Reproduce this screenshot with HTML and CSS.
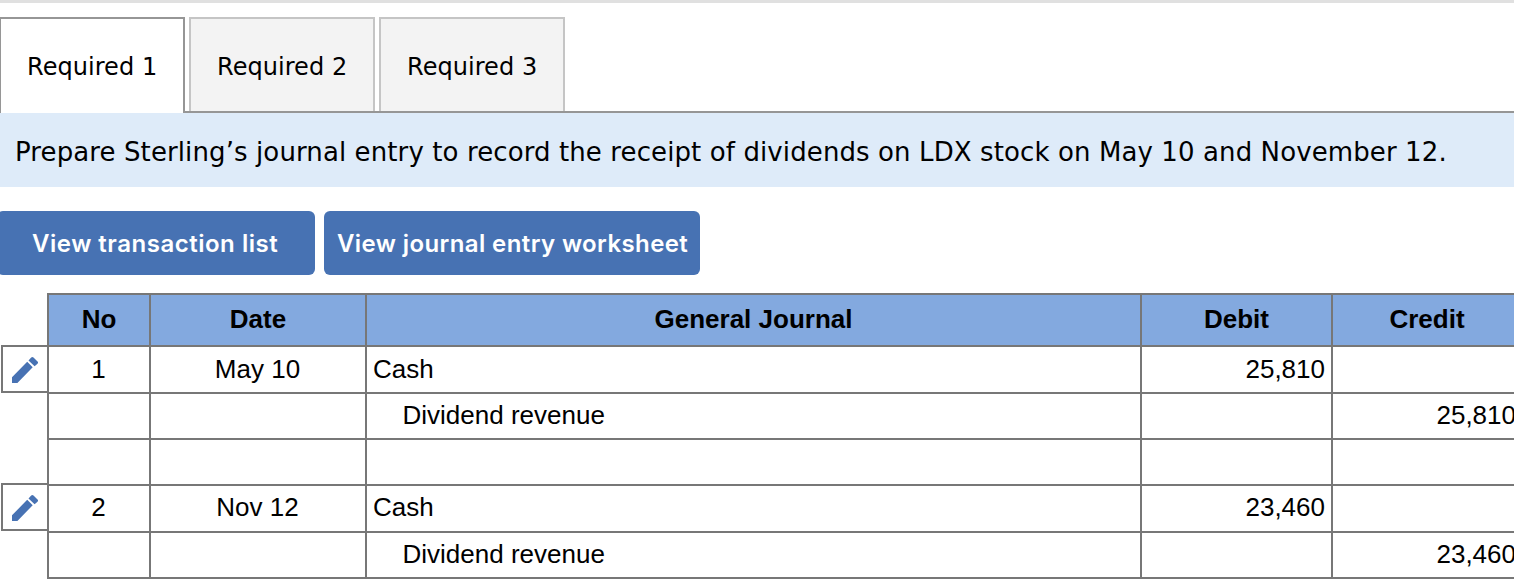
FILE: index.html
```
<!DOCTYPE html>
<html lang="en">
<head>
    <meta charset="UTF-8">
    <meta name="viewport" content="width=device-width, initial-scale=1.0">
    <title>Journal Entry</title>
    <link rel="stylesheet" href="styles.css">
</head>
<body>
    <div class="tabs">
        <div class="tab active">Required 1</div>
        <div class="tab">Required 2</div>
        <div class="tab">Required 3</div>
    </div>

    <div class="instruction">Prepare Sterling’s journal entry to record the receipt of dividends on LDX stock on May 10 and November 12.</div>

    <div class="actions">
        <button class="btn btn-list">View transaction list</button>
        <button class="btn btn-worksheet">View journal entry worksheet</button>
    </div>

    <div class="journal">
        <div class="side"></div>
        <div class="cell head">No</div>
        <div class="cell head">Date</div>
        <div class="cell head">General Journal</div>
        <div class="cell head">Debit</div>
        <div class="cell head head-credit">Credit</div>

        <div class="side">
            <div class="edit">
                <svg class="pencil" viewBox="0 0 26 26"><path d="M0 20.3 15.2 4.8l5.5 5.4L5.4 26H0zM16.5 3.4l2.7-2.8a1.6 1.6 0 0 1 2.3 0l4 3.9a1.6 1.6 0 0 1 0 2.3l-2.9 2.5z"/></svg>
            </div>
        </div>
        <div class="cell center first">1</div>
        <div class="cell center first">May 10</div>
        <div class="cell first">Cash</div>
        <div class="cell amount first">25,810</div>
        <div class="cell amount first"></div>

        <div class="side"></div>
        <div class="cell"></div>
        <div class="cell"></div>
        <div class="cell indent">Dividend revenue</div>
        <div class="cell amount"></div>
        <div class="cell amount">25,810</div>

        <div class="side"></div>
        <div class="cell"></div>
        <div class="cell"></div>
        <div class="cell"></div>
        <div class="cell"></div>
        <div class="cell"></div>

        <div class="side">
            <div class="edit edit-second">
                <svg class="pencil" viewBox="0 0 26 26"><path d="M0 20.3 15.2 4.8l5.5 5.4L5.4 26H0zM16.5 3.4l2.7-2.8a1.6 1.6 0 0 1 2.3 0l4 3.9a1.6 1.6 0 0 1 0 2.3l-2.9 2.5z"/></svg>
            </div>
        </div>
        <div class="cell center">2</div>
        <div class="cell center">Nov 12</div>
        <div class="cell">Cash</div>
        <div class="cell amount">23,460</div>
        <div class="cell amount"></div>

        <div class="side"></div>
        <div class="cell last"></div>
        <div class="cell last"></div>
        <div class="cell last indent">Dividend revenue</div>
        <div class="cell last amount"></div>
        <div class="cell last amount">23,460</div>
    </div>
</body>
</html>
```
FILE: styles.css
```
* {
    box-sizing: border-box;
}
body {
    margin: 0;
    height: 584px;
    overflow: hidden;
    background-color: #fff;
    color: #000;
    border-top: 3px solid #e0e0e0;
    font-family: "Liberation Sans", Arial, sans-serif;
}
.tabs {
    display: flex;
    gap: 4px;
    height: 96px;
    margin-top: 14px;
    font-family: Verdana, "DejaVu Sans", sans-serif;
    font-size: 24px;
    background: linear-gradient(#969696, #969696) bottom / 100% 2px no-repeat;
}
.tab {
    width: 186px;
    height: 94px;
    padding: 33px 0 0 26px;
    line-height: 30px;
    letter-spacing: 0.05px;
    white-space: nowrap;
    background-color: #f3f3f3;
    border: 2px solid #c5c5c5;
    border-bottom: none;
}
.tab.active {
    width: 185px;
    height: 96px;
    background-color: #fff;
    border-color: #969696;
    border-left-width: 1px;
}
.instruction {
    height: 74px;
    padding-left: 15px;
    line-height: 78px;
    letter-spacing: 0.105px;
    white-space: nowrap;
    background-color: #deebf9;
    font-family: Verdana, "DejaVu Sans", sans-serif;
    font-size: 26px;
}
.actions {
    display: flex;
    gap: 9px;
    margin: 24px 0 18px -3px;
}
.btn {
    height: 64px;
    padding: 0 0 0 13px;
    border: none;
    border-radius: 6px;
    background-color: #4772b3;
    color: #fff;
    font-family: Inter, sans-serif;
    font-size: 24px;
    font-weight: 600;
    letter-spacing: 0.4px;
    text-align: left;
    white-space: nowrap;
}
.btn-list {
    width: 318px;
    padding-left: 35px;
    letter-spacing: 0.52px;
}
.btn-worksheet {
    width: 376px;
}
.journal {
    display: grid;
    grid-template-columns: 47px 102px 216px 775px 191px 193px;
    grid-template-rows: 52px 47px 46px 46px 47px 48px;
    width: 1524px;
    font-size: 26px;
}
.cell {
    padding: 0 6px;
    line-height: 42px;
    white-space: nowrap;
    border-top: 2px solid #777;
    border-left: 2px solid #777;
}
.first {
    line-height: 44px;
}
.head {
    line-height: 49px;
    text-align: center;
    font-weight: bold;
    background-color: #83a9df;
}
.head-credit {
    padding-right: 9px;
}
.center {
    padding-right: 7px;
    text-align: center;
}
.indent {
    padding-left: 35.5px;
}
.amount {
    text-align: right;
}
.amount:nth-child(6n) {
    padding-right: 8px;
}
.last {
    border-bottom: 2px solid #777;
}
.edit {
    width: 46px;
    height: 48px;
    margin-left: 1px;
    padding: 10px 0 0 9px;
    border: 2px solid #777;
    border-right: none;
}
.edit-second {
    margin-top: -1px;
}
.pencil {
    display: block;
    width: 26px;
    height: 26px;
    fill: #4772b3;
}
```
